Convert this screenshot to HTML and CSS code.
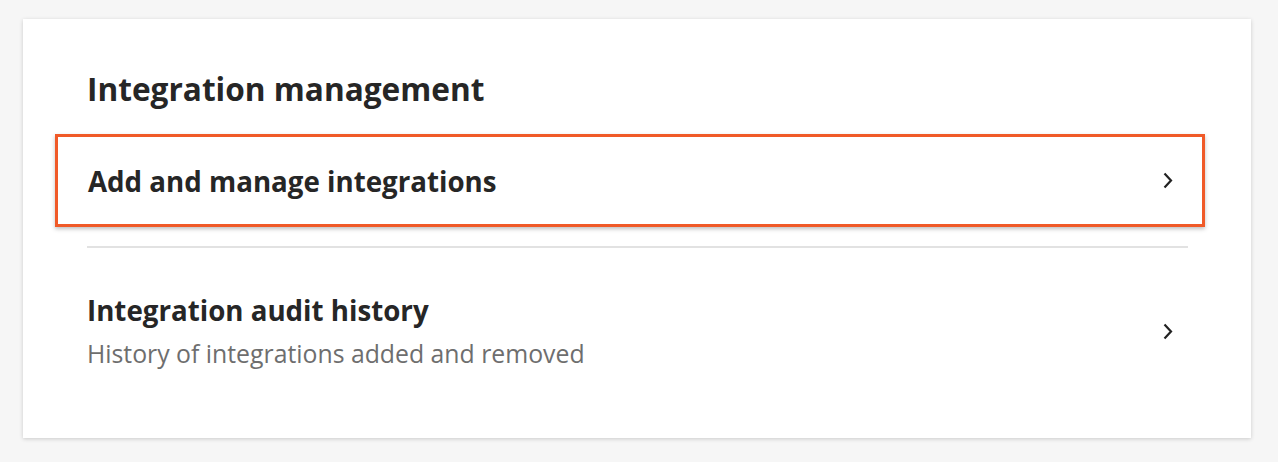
FILE: index.html
```html
<!DOCTYPE html>
<html lang="en">
<head>
    <meta charset="UTF-8">
    <meta name="viewport" content="width=device-width, initial-scale=1.0">
    <title>Integration management</title>
    <link rel="stylesheet" href="styles.css">
</head>
<body>
    <div class="card">
        <h2 class="card-title">Integration management</h2>
        <div class="menu">
            <a class="menu-item focused" href="#">
                <div class="menu-text">
                    <div class="menu-label">Add and manage integrations</div>
                </div>
                <svg class="chevron" width="10" height="17" viewBox="0 0 10 17"><path d="M1.5 1.5 L8 8.5 L1.5 15.5" fill="none" stroke="#222" stroke-width="2.2"/></svg>
            </a>
            <div class="divider"></div>
            <a class="menu-item with-desc" href="#">
                <div class="menu-text">
                    <div class="menu-label">Integration audit history</div>
                    <div class="menu-desc">History of integrations added and removed</div>
                </div>
                <svg class="chevron" width="10" height="17" viewBox="0 0 10 17"><path d="M1.5 1.5 L8 8.5 L1.5 15.5" fill="none" stroke="#222" stroke-width="2.2"/></svg>
            </a>
        </div>
    </div>
</body>
</html>
```

FILE: styles.css
```css
body {
    font-family: 'Open Sans', 'Liberation Sans', sans-serif;
    margin: 0;
    padding: 19px 27px 24px 23px;
    background-color: #f6f6f6;
}
.card {
    background: #ffffff;
    height: 419px;
    box-sizing: border-box;
    padding: 51px 63px 0 64px;
    box-shadow: 0 1px 4px rgba(0,0,0,0.18);
}
.card-title {
    margin: 0;
    font-size: 31.6px;
    font-weight: 700;
    color: #262626;
    line-height: 38px;
}
.menu {
    margin-top: 26px;
}
.menu-item {
    display: flex;
    align-items: center;
    justify-content: space-between;
    text-decoration: none;
    color: #262626;
    padding-right: 15px;
}
.menu-item.focused {
    height: 93px;
    box-sizing: border-box;
    margin: 0 -17px 0 -32px;
    padding: 0 29px 0 30px;
    border: 3px solid #f05a28;
    box-shadow: 0 2px 4px rgba(0,0,0,0.25);
}
.menu-label {
    font-size: 27.7px;
    font-weight: 700;
    line-height: 32px;
}
.menu-desc {
    font-size: 24.8px;
    color: #6e6e6e;
    margin-top: 11px;
    line-height: 32px;
}
.divider {
    height: 2px;
    background: #e2e2e2;
    margin-top: 19px;
}
.with-desc {
    padding-top: 46px;
}
.chevron {
    display: block;
}
```
